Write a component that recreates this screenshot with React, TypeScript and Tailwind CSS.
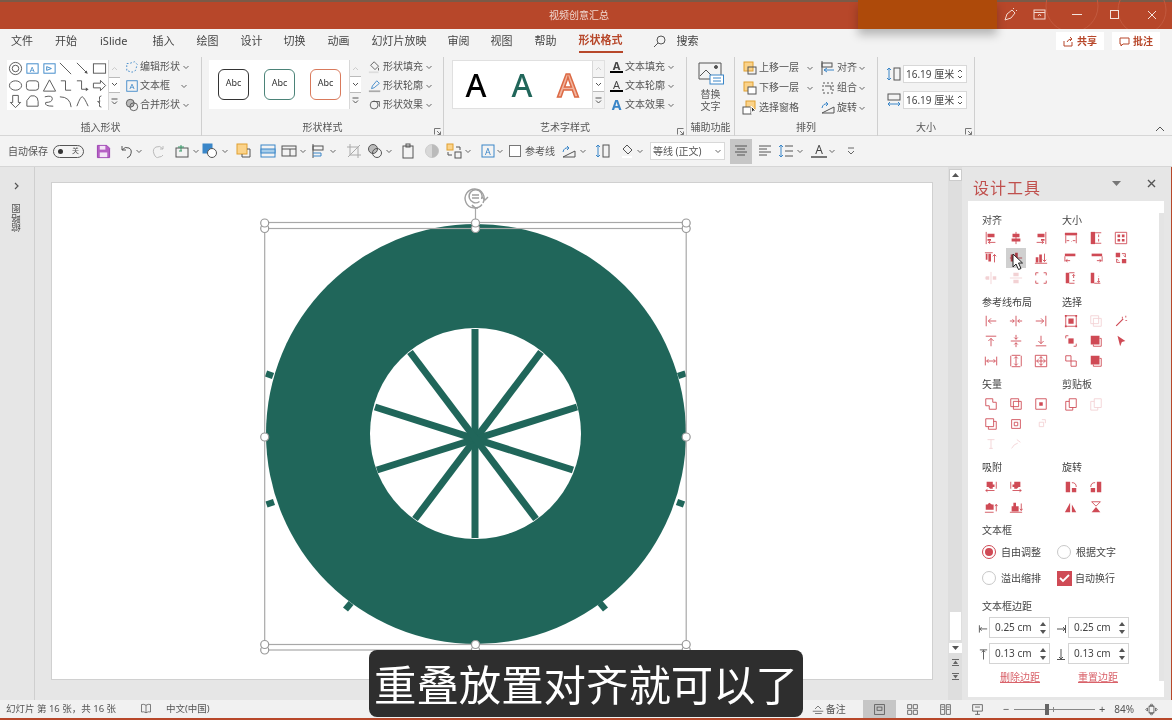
import type { ReactNode } from 'react'
import clsx from 'clsx'

const R = '#cf4a55'

function Ic({ children, size = 16, className }: { children: ReactNode; size?: number; className?: string }) {
  return (
    <svg width={size} height={size} viewBox="0 0 16 16" fill="none" stroke="#555" strokeWidth={1} className={clsx('shrink-0', className)}>
      {children}
    </svg>
  )
}

function Caret({ className }: { className?: string }) {
  return (
    <svg width="8" height="8" viewBox="0 0 8 8" fill="none" stroke="#666" strokeWidth={1} className={clsx('shrink-0', className)}>
      <path d="M1.500 3l2.500 2.500L6.500 3" />
    </svg>
  )
}

function Slot({ children, className }: { children: ReactNode; className?: string }) {
  return <div className={clsx('w-4 h-4 flex items-center justify-center shrink-0', className)}>{children}</div>
}

function Cmd({ icon, label, caretClass = 'ml-[2px]' }: { icon: ReactNode; label: string; caretClass?: string }) {
  return (
    <div className="flex items-center h-[19px] text-[10px] text-[#555] whitespace-nowrap">
      <div className="w-[15px] flex justify-center shrink-0">{icon}</div>
      <span className="ml-[1px]">{label}</span>
      <Caret className={caretClass} />
    </div>
  )
}

function GalleryScroll() {
  return (
    <div className="w-[12px] h-full flex flex-col border-l border-[#d8d8d8] bg-[#f3f3f3] shrink-0">
      <div className="h-1/3 flex items-center justify-center">
        <svg width="7" height="5" viewBox="0 0 7 5" fill="none" stroke="#ccc"><path d="M1 4l2.500-2.500L6 4" /></svg>
      </div>
      <div className="h-1/3 flex items-center justify-center border-y border-[#bbb] bg-white">
        <svg width="7" height="5" viewBox="0 0 7 5" fill="none" stroke="#555"><path d="M1 1l2.500 2.500L6 1" /></svg>
      </div>
      <div className="h-1/3 flex items-center justify-center">
        <svg width="7" height="7" viewBox="0 0 7 7" fill="none" stroke="#555"><path d="M0.500 1h6M1 3.500l2.500 2.500L6 3.500" /></svg>
      </div>
    </div>
  )
}

function Group({ width, label, children, expand }: { width: string; label: string; children: ReactNode; expand?: boolean }) {
  return (
    <div className={clsx('relative h-[79px] mt-[4px] flex flex-col border-r border-[#cfcfcf] shrink-0', width)}>
      <div className="h-[62px] flex">{children}</div>
      <div className="mt-[1px] text-center text-[10px] leading-[14px] text-[#555]">{label}</div>
      {expand && (
        <svg width="7" height="7" viewBox="0 0 7 7" fill="none" stroke="#777" className="absolute right-[2px] bottom-[1px]">
          <path d="M0.500 6.500V0.500H6.500M3 3l3.500 3.500M6.500 3.500v3h-3" />
        </svg>
      )}
    </div>
  )
}

const shapes = [
  <><circle cx="8" cy="8" r="6.500" /><circle cx="8" cy="8" r="3.500" /></>,
  <><rect x="2" y="3" width="12" height="10" stroke="#3a86c8" /><text x="5" y="11.500" fontSize="8" stroke="none" fill="#3a86c8">A</text></>,
  <><rect x="2" y="3" width="12" height="10" stroke="#3a86c8" /><path d="M5 6l5 2-5 2z" stroke="#3a86c8" /></>,
  <path d="M2 2l12 12" />,
  <><path d="M2 2l11 11" /><path d="M13.500 13.500l-3.500-1 2.500-2.500z" fill="#555" stroke="none" /></>,
  <rect x="1.500" y="3" width="13" height="10" />,
  <ellipse cx="8" cy="8" rx="6.500" ry="5" />,
  <rect x="1.500" y="3" width="13" height="10" rx="3" />,
  <path d="M8 2l6.500 12h-13z" />,
  <path d="M3 3h5v10h6" />,
  <><path d="M2 3h5v9h5" /><path d="M14.500 12l-3-2v4z" fill="#555" stroke="none" /></>,
  <path d="M1.500 5.500H9V2.500L14.500 8 9 13.500v-3H1.500z" />,
  <path d="M5 1.500h6V9h2.500L8 14.500 2.500 9H5z" />,
  <path d="M2 13V7l4-5h4q4 1 4 6l0 5z" />,
  <path d="M3 3q8-2 8 2T4 9q-2 4 8 4" />,
  <path d="M2 3q11 0 12 11" />,
  <path d="M2 13Q6 2 8 3t6 10" />,
  <path d="M10 2q-3 0-2 4t-2 2q3 0 2 3t2 3" />,
]

function Abc({ border }: { border: string }) {
  return (
    <div className={clsx('w-[31px] h-[31px] rounded-[6px] border flex items-center justify-center text-[9px] text-[#333] pb-[4px]', border)}>
      Abc
    </div>
  )
}

const FillIcon = <Ic size={14}><path d="M7 2l5 5-4 4-5-5zM12 9v3" /><path d="M1 14h11" stroke="#ddd" strokeWidth={2} /></Ic>
const OutlineIcon = <Ic size={14}><path d="M10 2l3 3-6 5-3 1 1-3z" stroke="#3a86c8" /><path d="M1 14h13" stroke="#aaa" strokeWidth={2} /></Ic>
const EffectIcon = <Ic size={14}><circle cx="7" cy="8" r="4.500" /><path d="M5 4h8v6" /></Ic>
const TextA = ({ outline, blue }: { outline?: boolean; blue?: boolean }) => (
  <div className={clsx('w-[15px] text-center font-bold leading-none', blue ? 'text-[14px] text-[#3a86c8]' : 'text-[11px] text-[#444]', outline && 'font-normal')}>
    A{!blue && <div className="h-[2px] w-[13px] mx-auto bg-black" />}
  </div>
)
const LayerIcon = ({ under }: { under?: boolean }) => (
  <Ic><rect x="2" y="2" width="9" height="9" fill="#fbd38a" stroke="#e0a030" /><rect x="6" y="7" width="8" height="7" fill={under ? '#fff' : 'none'} stroke="#555" /></Ic>
)

function Ribbon() {
  return (
    <div className="h-[82px] flex bg-[#f3f3f3] shrink-0">
      <Group width="w-[202px]" label="插入形状">
        <div className="ml-[7px] mt-[3px] w-[113px] h-[50px] flex bg-white">
          <div className="grid grid-cols-6 flex-1 content-center">
            {shapes.map((s, i) => (
              <div key={i} className="h-[16.5px] flex items-center justify-center"><Ic size={15}>{s}</Ic></div>
            ))}
          </div>
          <GalleryScroll />
        </div>
        <div className="ml-[4px] flex flex-col">
          <Cmd label="编辑形状" icon={<Ic size={14}><path d="M2 12V4h3l6-2 3 3-2 7-4 2z" strokeDasharray="2 2" stroke="#3a86c8" /></Ic>} />
          <Cmd label="文本框" caretClass="ml-[10px]" icon={<Ic size={14}><rect x="2" y="2" width="12" height="12" stroke="#3a86c8" /><text x="5" y="11.500" fontSize="9" stroke="none" fill="#3a86c8">A</text></Ic>} />
          <Cmd label="合并形状" icon={<Ic size={14}><circle cx="6" cy="6" r="4.500" fill="#bbb" /><circle cx="10" cy="10" r="4.500" /></Ic>} />
        </div>
      </Group>

      <Group width="w-[242px]" label="形状样式" expand>
        <div className="ml-[7px] mt-[3px] w-[152px] h-[49px] flex bg-white">
          <div className="flex-1 flex items-center pl-[9px] gap-[15px]">
            <Abc border="border-[#333]" />
            <Abc border="border-[#4b8378]" />
            <Abc border="border-[#d97a5c]" />
          </div>
          <GalleryScroll />
        </div>
        <div className="ml-[6px] flex flex-col">
          <Cmd label="形状填充" icon={FillIcon} />
          <Cmd label="形状轮廓" icon={OutlineIcon} />
          <Cmd label="形状效果" icon={EffectIcon} />
        </div>
      </Group>

      <Group width="w-[243px]" label="艺术字样式" expand>
        <div className="ml-[8px] mt-[3px] w-[153px] h-[49px] flex bg-white border border-[#e0e0e0]">
          <div className="flex-1 flex items-center text-[32px] font-medium leading-none text-center">
            <span className="w-[46px] text-black">A</span>
            <span className="w-[46px] text-[#21665a]">A</span>
            <span className="w-[46px] text-[#f2b59f] [-webkit-text-stroke:1.5px_#dc6a45]">A</span>
          </div>
          <GalleryScroll />
        </div>
        <div className="ml-[4px] flex flex-col">
          <Cmd label="文本填充" icon={<TextA />} />
          <Cmd label="文本轮廓" icon={<TextA outline />} />
          <Cmd label="文本效果" icon={<TextA blue />} />
        </div>
      </Group>

      <Group width="w-[48px]" label="辅助功能">
        <div className="w-full flex flex-col items-center pt-[5px] text-[10px] leading-[12px] text-[#555]">
          <svg width="26" height="23" viewBox="0 0 26 23" fill="none" stroke="#555">
            <path d="M1 1h22v12M1 1v16h12" />
            <path d="M2 14l6-6 6 6M16 6l2-2" />
            <circle cx="18" cy="5" r="1.500" fill="#555" />
            <rect x="12" y="13" width="13.500" height="9" fill="#fff" stroke="#3a86c8" />
            <path d="M15 16h8M15 19h8" stroke="#3a86c8" />
          </svg>
          <span className="mt-[3px]">替换</span>
          <span>文字</span>
        </div>
      </Group>

      <Group width="w-[143px]" label="排列">
        <div className="ml-[7px] pt-[1px] flex flex-col gap-[1px] text-[10px] text-[#555]">
          {[['上移一层', false], ['下移一层', true]].map(([t, u]) => (
            <div key={t as string} className="flex items-center h-[19px]">
              <LayerIcon under={u as boolean} />
              <span className="ml-[1px] w-[47px]">{t}</span>
              <Caret />
            </div>
          ))}
          <div className="flex items-center h-[19px]">
            <Ic><rect x="4" y="1" width="9" height="8" fill="#fbd38a" stroke="#e0a030" /><rect x="1" y="7" width="8" height="7" fill="#fff" /><path d="M9 6l5 5-3 0-1 3z" fill="#333" stroke="#fff" /></Ic>
            <span className="ml-[1px]">选择窗格</span>
          </div>
        </div>
        <div className="ml-[6px] pt-[1px] flex flex-col gap-[1px] text-[10px] text-[#555]">
          <div className="flex items-center h-[19px]"><Ic><path d="M2 1v14" /><rect x="2" y="3" width="10" height="4" /><path d="M14 10H4M7 8l-3 2 3 2" stroke="#3a86c8" /></Ic><span className="ml-[1px]">对齐</span><Caret className="ml-[1px]" /></div>
          <div className="flex items-center h-[19px]"><Ic><rect x="3" y="3" width="10" height="10" strokeDasharray="2 2" /><path d="M5 6h6v4" /></Ic><span className="ml-[1px]">组合</span><Caret className="ml-[1px]" /></div>
          <div className="flex items-center h-[19px]"><Ic><path d="M2 13h12V7z" /><path d="M2 8q1-5 6-4M6 2l2 2-2 2" stroke="#3a86c8" /></Ic><span className="ml-[1px]">旋转</span><Caret className="ml-[1px]" /></div>
        </div>
      </Group>

      <Group width="w-[97px]" label="大小" expand>
        <div className="ml-[8px] mt-[8px] flex flex-col gap-[8px]">
          <SizeRow icon={<Ic><path d="M3 2v12M1 4l2-2 2 2M1 12l2 2 2-2" stroke="#3a86c8" /><rect x="8" y="2" width="6" height="12" /></Ic>} />
          <SizeRow icon={<Ic><rect x="2" y="2" width="12" height="6" /><path d="M2 12h12M4 10l-2 2 2 2M12 10l2 2-2 2" stroke="#3a86c8" /></Ic>} />
        </div>
      </Group>

      <div className="flex-1 relative">
        <svg width="10" height="6" viewBox="0 0 10 6" fill="none" stroke="#555" className="absolute right-[7px] bottom-[3px]"><path d="M1 5l4-4 4 4" /></svg>
      </div>
    </div>
  )
}

function SizeRow({ icon }: { icon: ReactNode }) {
  return (
    <div className="flex items-center">
      {icon}
      <div className="ml-[1px] w-[64px] h-[18px] bg-white border border-[#d8d8d8] flex items-center text-[10px] text-[#444] pl-[2px]">
        <span>16.19 厘米</span>
        <div className="ml-auto mr-[3px] flex flex-col gap-[2px]">
          <svg width="6" height="4" viewBox="0 0 6 4" fill="none" stroke="#555"><path d="M1 3l2-2 2 2" /></svg>
          <svg width="6" height="4" viewBox="0 0 6 4" fill="none" stroke="#555"><path d="M1 1l2 2 2-2" /></svg>
        </div>
      </div>
    </div>
  )
}

function QuickBar() {
  return (
    <div className="h-[31px] flex items-center bg-[#f3f3f3] border-t border-[#d6d6d6] border-b-0 text-[#555] shrink-0">
      <span className="ml-[8px] w-[39px] text-[10px] whitespace-nowrap">自动保存</span>
      <div className="ml-[6px] w-[31px] h-[13px] rounded-full border border-[#555] flex items-center justify-between px-[4px]">
        <div className="w-[5px] h-[5px] rounded-full bg-[#333]" />
        <span className="text-[7px]">关</span>
      </div>
      <Slot className="ml-[11px]"><Ic size={15}><path d="M1.500 1.500h10l3 3v10h-13z" fill="#b55fc4" stroke="#9a3fb0" /><rect x="4" y="2" width="6" height="4" fill="#f3e4f6" stroke="none" /><rect x="4" y="9" width="8" height="5" fill="#f3e4f6" stroke="none" /></Ic></Slot>
      <Slot className="ml-[8px]"><Ic><path d="M3 3v4h4" /><path d="M3 7q3-4 7-2t1 8l-3 2" /></Ic></Slot>
      <Caret />
      <Slot className="ml-[7px]"><Ic><path d="M13 3v3h-3" stroke="#bbb" /><path d="M13 6q-3-4-7-2T4 11t5 3q3 0 4-2" stroke="#bbb" /></Ic></Slot>
      <Slot className="ml-[8px]"><Ic><rect x="2" y="5" width="12" height="9" /><path d="M5 8h3M7 2v6M4 4h6" stroke="#3a9a6a" /></Ic></Slot>
      <Caret className="ml-[2px]" />
      <Slot className="ml-[2px]"><Ic><rect x="1" y="1" width="9" height="9" fill="#3a86c8" stroke="#3a86c8" /><circle cx="10" cy="10" r="4.500" fill="#fff" /></Ic></Slot>
      <Caret className="ml-[3px]" />
      <Slot className="ml-[7px]"><Ic><rect x="1" y="1" width="10" height="10" fill="#fbd38a" stroke="#e0a030" /><path d="M11 6h3v8H6v-3" /></Ic></Slot>
      <Slot className="ml-[8px]"><Ic><rect x="1" y="2" width="14" height="12" stroke="#3a86c8" /><rect x="1" y="6" width="14" height="4" fill="#a7cdea" stroke="#3a86c8" /></Ic></Slot>
      <Slot className="ml-[5px]"><Ic><rect x="1" y="3" width="14" height="10" /><path d="M1 6h14M9 6v7" /></Ic></Slot>
      <Caret className="ml-[2px]" />
      <Slot className="ml-[4px]"><Ic><path d="M2 1v14" /><rect x="2" y="3" width="10" height="4" /><path d="M2 10h8v3H2" stroke="#3a86c8" /></Ic></Slot>
      <Caret className="ml-[2px]" />
      <Slot className="ml-[9px]"><Ic><path d="M4 1v11h11M1 4h11v11" stroke="#aaa" /><path d="M2 14L14 2" stroke="#aaa" /></Ic></Slot>
      <Slot className="ml-[5px]"><Ic><circle cx="6" cy="6" r="4.500" fill="#bbb" /><circle cx="10" cy="10" r="4.500" /></Ic></Slot>
      <Caret className="ml-[2px]" />
      <Slot className="ml-[7px]"><Ic><rect x="3" y="3" width="10" height="12" /><rect x="6" y="1" width="4" height="3" /></Ic></Slot>
      <Slot className="ml-[8px]"><Ic><circle cx="8" cy="8" r="6.500" fill="#d8d8d8" stroke="#ccc" /><path d="M8 1.500a6.500 6.500 0 010 13z" fill="#bbb" stroke="none" /></Ic></Slot>
      <Slot className="ml-[6px]"><Ic><rect x="1" y="1" width="6" height="6" fill="#fbd38a" stroke="#e0a030" /><rect x="9" y="9" width="6" height="6" /><path d="M10 4h4v3M6 12H2V9" /></Ic></Slot>
      <Caret className="ml-[2px]" />
      <Slot className="ml-[8px]"><Ic><rect x="2" y="2" width="12" height="12" stroke="#3a86c8" /><text x="5" y="11.500" fontSize="9" stroke="none" fill="#3a86c8">A</text></Ic></Slot>
      <Caret />
      <div className="ml-[5px] w-[12px] h-[12px] border border-[#777] bg-white shrink-0" />
      <span className="ml-[4px] w-[30px] text-[10px] whitespace-nowrap">参考线</span>
      <Slot className="ml-[6px]"><Ic><path d="M2 14h12V8z" /><path d="M2 9q1-5 6-4M6 3l2 2-2 2" stroke="#3a86c8" /></Ic></Slot>
      <Caret className="ml-[2px]" />
      <Slot className="ml-[8px]"><Ic><path d="M3 2v12M1 4l2-2 2 2M1 12l2 2 2-2" stroke="#3a86c8" /><rect x="8" y="2" width="6" height="12" /></Ic></Slot>
      <Slot className="ml-[9px]"><Ic><path d="M7 2l5 5-4 4-5-5z" /><path d="M2 14h10" stroke="#fff" strokeWidth={2} /></Ic></Slot>
      <Caret />
      <div className="ml-[6px] w-[75px] h-[18px] bg-white border border-[#d8d8d8] flex items-center justify-between px-[2px] text-[10px] shrink-0">
        <span className="whitespace-nowrap">等线 (正文)</span>
        <Caret />
      </div>
      <div className="ml-[5px] w-[22px] h-[25px] bg-[#c6c6c6] flex items-center justify-center shrink-0">
        <Ic><path d="M2 3h12M4 6h8M2 9h12M4 12h8" /></Ic>
      </div>
      <Slot className="ml-[5px]"><Ic><path d="M2 3h12M2 6h8M2 9h12M2 12h8" /></Ic></Slot>
      <Slot className="ml-[5px]"><Ic><path d="M7 3h8M7 8h8M7 13h8" /><path d="M3 2v12M1 4l2-2 2 2M1 12l2 2 2-2" stroke="#3a86c8" /></Ic></Slot>
      <Caret className="ml-[2px]" />
      <div className="ml-[7px] w-4 text-center text-[12px] leading-none text-[#444] shrink-0">A<div className="h-[2px] bg-[#777]" /></div>
      <Caret className="ml-[1px]" />
      <Slot className="ml-[7px]"><svg width="8" height="8" viewBox="0 0 8 8" fill="none" stroke="#666"><path d="M1 1h6M1 4l3 3 3-3" /></svg></Slot>
    </div>
  )
}

function handle(x: number, y: number) {
  return <circle key={`${x}-${y}`} cx={x} cy={y} r="4" fill="#fff" stroke="#999" strokeWidth="1.2" />
}

const spokes = [
  [475, 329, 475, 538],
  [541, 352, 415, 519],
  [577, 407, 377, 470],
  [573, 470, 375, 407],
  [536, 519, 410, 352],
]

const ticks = [
  [266, 373.5, 273, 376],
  [685.5, 373.5, 678, 376],
  [266.5, 504.5, 274, 502],
  [684, 504.5, 677, 502],
  [345.5, 609.5, 351, 603],
  [605.5, 609.5, 600, 603],
]

function Diagram() {
  return (
    <svg width="880" height="496" viewBox="52 183 880 496" className="block">
      <circle cx="476" cy="434" r="210" fill="#20665a" />
      <circle cx="475.5" cy="433.5" r="105.5" fill="#fff" />
      {spokes.map(([a, b, c, d]) => (
        <line key={a} x1={a} y1={b} x2={c} y2={d} stroke="#20665a" strokeWidth="7" />
      ))}
      {ticks.map(([a, b, c, d]) => (
        <line key={`${a}${b}`} x1={a} y1={b} x2={c} y2={d} stroke="#20665a" strokeWidth="6.5" />
      ))}
      <g fill="none" stroke="#a8a8a8" strokeWidth="1.2">
        <rect x="264.7" y="222.5" width="421.5" height="6" />
        <rect x="264.7" y="644.5" width="421.5" height="5.5" />
        <path d="M264.7 228V645M686.200 228V645M475.5 208V222" />
      </g>
      {[264.7, 475.5, 686.2].flatMap(x => [handle(x, 228.5), handle(x, 223), handle(x, 650), handle(x, 644.5)])}
      {handle(264.7, 437)}
      {handle(686.2, 437)}
      <g fill="none" stroke="#a0a0a0" strokeWidth="1.4">
        <path d="M483 203a9.500 9.500 0 1 0-1 1.500" />
        <path d="M481.500 199a6.500 6.500 0 1 0-2 2.500" />
        <path d="M472 195h7M472 198h7M472 205q2 3 6 3M482 197l3 3 3-3" />
      </g>
    </svg>
  )
}

const icons: Record<string, [string, string?]> = {
  al: ['M4 3h8v4H4zM4 9h4v2H4z', 'M2.500 1v14M13 13H5l2-1.500M5 13l2 1.500'],
  ac: ['M4 3h8v4H4zM3 8.500h10V12H3z', 'M8 1v14'],
  ar: ['M4 3h8v4H4zM8 9h4v2H8z', 'M13.500 1v14M3 13h8l-2-1.500M11 13l-2 1.500'],
  at: ['M2 3h2v7H2zM5 3h3v9H5z', 'M12 13V4l-2 2M12 4l2 2M1 2h9'],
  am: ['M2 4h4v8H2zM7 2h3v12H7z', 'M1 8h14'],
  ab: ['M2 7h3v6H2zM6 4h3v9H6z', 'M12 3v9l-2-2M12 12l2-2M1 14h14'],
  f1: ['M2 6h4v4H2zM10 6h4v4h-4z', 'M8 1v14M1 8h2'],
  f2: ['M5 2h6v4H5zM5 10h6v4H5z', 'M1 8h14'],
  f3: ['', 'M2 5V2h3M11 2h3v3M14 11v3h-3M5 14H2v-3'],
  s1: ['M1 2h14v3H1z', 'M2 5v9M14 5v9M3 11h3M13 11h-3M8 12h.5'],
  s2: ['M2 1h5v14H2z', 'M7 2h7M7 14h7M11 4v3M11 9v3'],
  s3: ['M4 4h3v3H4zM9 4h3v3H9zM4 9h3v3H4zM9 9h3v3H9z', 'M1.500 1.500h13v13h-13z'],
  s4: ['M1 3h12v3H1z', 'M1 6v6M2 11h5M2 11l2-1.500M2 11l2 1.500'],
  s5: ['M3 3h12v3H3z', 'M15 6v6M14 11H9M14 11l-2-1.500M14 11l-2 1.500'],
  s6: ['M2 2h5v5H2zM9 9h5v5H9z', 'M9 3h4v4l-2-2M7 13H3V9l2 2'],
  s7: ['M2 2h4v12H2z', 'M6 2h6M6 14h6M11 4V8M9.500 5.500L11 4l1.500 1.500M10 11h2'],
  s8: ['M2 2h4v12H2z', 'M6 14h7M11 6h.5M11 8v5M9.500 11.500L11 13l1.500-1.500'],
  g1: ['', 'M2.500 2v12M5 8h9M5 8l3-3M5 8l3 3'],
  g2: ['', 'M8 2v12M1 8h5M6 8L4 6M6 8l-2 2M15 8h-5M10 8l2-2M10 8l2 2'],
  g3: ['', 'M13.500 2v12M2 8h9M11 8L8 5M11 8l-3 3'],
  g4: ['', 'M2 2.500h12M8 5v9M8 5L5 8M8 5l3 3'],
  g5: ['', 'M2 8h12M8 1v5M8 6L6 4M8 6l2-2M8 15v-5M8 10l-2 2M8 10l2 2'],
  g6: ['', 'M2 13.500h12M8 2v9M8 11L5 8M8 11l3-3'],
  g7: ['', 'M1.500 3v10M14.500 3v10M3 8h10M3 8l2-2M3 8l2 2M13 8l-2-2M13 8l-2 2'],
  g8: ['', 'M3 1.500h10M3 14.500h10M8 3v10M8 3L6 5M8 3l2 2M8 13l-2-2M8 13l2-2M2 2v12M14 2v12'],
  g9: ['', 'M1.500 1.500h13v13h-13zM8 3v10M3 8h10M8 3L6 5M8 3l2 2M8 13l-2-2M8 13l2-2M3 8l2-2M3 8l2 2M13 8l-2-2M13 8l-2 2'],
  x1: ['M5 5h6v6H5zM1 1h2v2H1zM13 1h2v2h-2zM1 13h2v2H1zM13 13h2v2h-2z', 'M2 2h12v12H2z'],
  x2: ['', 'M2 2h9v9H2zM5 5h9v9H5z'],
  x3: ['M10 5l1 1-8 8-1-1zM9 3h1v2H9zM13 2h1v2h-1zM13 7h2v1h-2z', ''],
  x4: ['M5 5h6v6H5z', 'M2 5V2h3M14 11v3h-3'],
  x5: ['M2 2h10v10H2z', 'M12 5h2v9H5v-2'],
  x6: ['M4 2l9 6-4 1-2 5z', ''],
  x7: ['', 'M2 2h6v6H2zM8 8h6v6H8z'],
  x8: ['M2 2h10v10H2z', 'M12 5h2v9H5v-2'],
  v1: ['', 'M2 2h8v4h4v8H6v-4H2z'],
  v2: ['', 'M2 2h9v9H2zM5 5h9v9H5z'],
  v3: ['M6 6h4v4H6z', 'M2 2h12v12H2z'],
  v4: ['', 'M2 2h9v9H2zM5 11v3h9V5h-3'],
  v5: ['', 'M3 3h10v10H3zM6 6h4v4H6z'],
  v6: ['', 'M6 6h5v5H6zM9 3h4v4'],
  v7: ['', 'M4 3h8M8 3v10M6 13h4'],
  v8: ['', 'M3 13l3-4 4-2M9 3l4 3'],
  c1: ['', 'M6 2h8v10H6zM2 5h4M2 5v10h8v-3'],
  c2: ['', 'M6 2h8v10H6zM2 5h4M2 5v10h8v-3'],
  h1: ['M3 2h7v3h2v3h-2v2H7L5 8H3z', 'M2 12h10M2 12l2-1.500M2 12l2 1.500M14 2v8'],
  h2: ['M6 2h7v6h-2l-2 2H6V8H4V5h2z', 'M14 12H4M14 12l-2-1.500M14 12l-2 1.500M2 2v8'],
  h3: ['M2 5h2l2-2 3 2h2v6H2z', 'M14 5v8M14 5l-1.500 2M14 5l1.500 2M1 14h10'],
  h4: ['M3 7h2V3h3v4h3v6H3z', 'M14 4v8M14 12l-1.500-2M14 12l1.500-2M1 14h14'],
  r1: ['M2 2h5v12H2zM9 9h5v5H9z', 'M9 3q5 0 5 5'],
  r2: ['M9 2h5v12H9zM2 9h5v5H2z', 'M7 3q-5 0-5 5'],
  r3: ['M7 3v11H1zM9 5l5 9H9z', ''],
  r4: ['M3 14h10L8 8z', 'M3 2h10L8 7z'],
}

function PanelIcon({ name, faint }: { name: string; faint?: boolean }) {
  const [f, s] = icons[name]
  return (
    <svg width="14" height="14" viewBox="0 0 16 16" className={clsx(faint && 'opacity-25')}>
      {f && <path d={f} fill={R} />}
      {s && <path d={s} fill="none" stroke={R} strokeWidth="1" />}
    </svg>
  )
}

type Cell = string | null

function IconGrid({ rows, light }: { rows: Cell[]; light?: string[] }) {
  return (
    <div className="w-[80px] grid grid-cols-[25px_25px_25px] auto-rows-[20px] shrink-0">
      {rows.map((n, i) => (
        <div key={i} className="flex items-center justify-center">
          {n && <PanelIcon name={n} faint={light?.includes(n)} />}
        </div>
      ))}
    </div>
  )
}

function Title({ left, right, className }: { left: string; right?: string; className?: string }) {
  return (
    <div className={clsx('flex h-[14px] text-[10px] leading-[14px] text-[#444]', className)}>
      <span className="ml-[4px] w-[80px]">{left}</span>
      {right && <span>{right}</span>}
    </div>
  )
}

function Radio({ on, label }: { on?: boolean; label: string }) {
  return (
    <div className="w-[75px] flex items-center">
      <div className={clsx('ml-[4px] w-[14px] h-[14px] rounded-full border flex items-center justify-center shrink-0', on ? 'border-[#cf4a55]' : 'border-[#c8c8c8]')}>
        {on && <div className="w-[8px] h-[8px] rounded-full bg-[#cf4a55]" />}
      </div>
      <span className="ml-[5px] text-[10px] text-[#444] whitespace-nowrap">{label}</span>
    </div>
  )
}

function Spin({ value }: { value: string }) {
  return (
    <div className="w-[61px] h-[21px] bg-white border border-[#d4d4d4] flex items-center pl-[5px] text-[10px] text-[#444]">
      <span>{value}</span>
      <div className="ml-auto mr-[3px] flex flex-col gap-[4px]">
        <svg width="6" height="4" viewBox="0 0 6 4" fill="#555"><path d="M3 0l3 4H0z" /></svg>
        <svg width="6" height="4" viewBox="0 0 6 4" fill="#555"><path d="M0 0h6L3 4z" /></svg>
      </div>
    </div>
  )
}

function DesignPanel() {
  return (
    <div className="w-[210px] h-full flex flex-col bg-[#e6e6e6] border-r border-[#b7472a] shrink-0">
      <div className="h-[34px] flex items-center pl-[11px] pr-[15px] shrink-0">
        <span className="text-[16px] text-[#c0504d] tracking-[1px] mt-[8px]">设计工具</span>
        <svg width="9" height="5" viewBox="0 0 9 5" fill="#777" className="ml-auto mr-[26px] mb-[2px]"><path d="M0 0h9L4.500 5z" /></svg>
        <svg width="9" height="9" viewBox="0 0 9 9" stroke="#555" strokeWidth="1.4" className="mb-[2px]"><path d="M1 1l7 7M8 1L1 8" /></svg>
      </div>
      <div className="ml-[6px] w-[196px] h-[496px] bg-white relative pl-[10px] pt-[12px]">
        <div className="absolute right-0 top-[12px] w-[5px] h-[468px] bg-[#e4e4e4]" />
        <Title left="对齐" right="大小" />
        <div className="flex mt-[1px] relative">
          <IconGrid rows={['al', 'ac', 'ar', 'at', 'am', 'ab', 'f1', 'f2', 'f3']} light={['f1', 'f2']} />
          <IconGrid rows={['s1', 's2', 's3', 's4', 's5', 's6', 's7', 's8', null]} />
          <div className="absolute left-[28px] top-[20px] w-[20px] h-[20px] bg-[#d0d0d0] mix-blend-multiply" />
          <svg width="13" height="18" viewBox="0 0 13 18" className="absolute left-[34px] top-[25px]">
            <path d="M1 1v13l3-3 2.500 5.500 2.500-1-2.500-5.500h4z" fill="#fff" stroke="#222" />
          </svg>
        </div>
        <Title left="参考线布局" right="选择" className="mt-[7px]" />
        <div className="flex mt-[2px]">
          <IconGrid rows={['g1', 'g2', 'g3', 'g4', 'g5', 'g6', 'g7', 'g8', 'g9']} />
          <IconGrid rows={['x1', 'x2', 'x3', 'x4', 'x5', 'x6', 'x7', 'x8', null]} light={['x2']} />
        </div>
        <Title left="矢量" right="剪贴板" className="mt-[6px]" />
        <div className="flex mt-[3px]">
          <IconGrid rows={['v1', 'v2', 'v3', 'v4', 'v5', 'v6', 'v7', 'v8', null]} light={['v6', 'v7', 'v8']} />
          <IconGrid rows={['c1', 'c2', null]} light={['c2']} />
        </div>
        <Title left="吸附" right="旋转" className="mt-[6px]" />
        <div className="flex mt-[3px]">
          <IconGrid rows={['h1', 'h2', null, 'h3', 'h4', null]} />
          <IconGrid rows={['r1', 'r2', null, 'r3', 'r4', null]} />
        </div>
        <Title left="文本框" className="mt-[6px]" />
        <div className="flex h-[20px] mt-[5px] items-center">
          <Radio on label="自由调整" />
          <Radio label="根据文字" />
        </div>
        <div className="flex h-[20px] mt-[6px] items-center">
          <Radio label="溢出缩排" />
          <div className="w-[15px] h-[15px] bg-[#cf4a55] flex items-center justify-center shrink-0 ml-[4px]">
            <svg width="11" height="9" viewBox="0 0 11 9" fill="none" stroke="#fff" strokeWidth="1.800"><path d="M1 4l3 3 6-6" /></svg>
          </div>
          <span className="ml-[3px] text-[10px] text-[#444] whitespace-nowrap">自动换行</span>
        </div>
        <Title left="文本框边距" className="mt-[11px]" />
        <div className="mt-[4px] flex flex-col gap-[5px]">
          {[['M1.500 3v8M2 7h8M2 7l2-2M2 7l2 2', 'M10.500 3v8M10 7H2M10 7L8 5M10 7L8 9', '0.25 cm'], ['M2 1.500h8M6 12V2M6 2L4 4M6 2l2 2', 'M2 11.500h8M6 1v10M6 11L4 9M6 11l2-2', '0.13 cm']].map(([a, b, v]) => (
            <div key={v} className="flex items-center">
              <svg width="11" height="12" viewBox="0 0 12 12" fill="none" stroke="#555"><path d={a} /></svg>
              <Spin value={v} />
              <svg width="12" height="12" viewBox="0 0 12 12" fill="none" stroke="#555" className="ml-[5px] mr-[1px]"><path d={b} /></svg>
              <Spin value={v} />
            </div>
          ))}
        </div>
        <div className="mt-[6px] flex text-[10px] leading-[14px] text-[#d9626a] underline">
          <span className="ml-[22px]">删除边距</span>
          <span className="ml-[38px]">重置边距</span>
        </div>
      </div>
    </div>
  )
}

function StatusBar() {
  return (
    <div className="h-[18px] flex items-center bg-[#f1f1f1] text-[#555] text-[9.5px] whitespace-nowrap shrink-0">
      <span className="ml-[6px] w-[119px]">幻灯片 第 16 张，共 16 张</span>
      <Ic size={12} className="ml-[15px]"><path d="M2 2q3-1 6 1 3-2 6-1v10q-3-1-6 1-3-2-6-1zM8 3v10" /></Ic>
      <span className="ml-[14px]">中文(中国)</span>
      <Ic size={12} className="ml-[602px]"><path d="M1 11h14M4 14h9M8 4l-4 4M8 4l4 4" /></Ic>
      <span className="ml-[2px] w-[22px] text-[10px]">备注</span>
      <div className="ml-[15px] w-[33px] h-full bg-[#c6c6c6] flex items-center justify-center shrink-0">
        <Ic size={13}><rect x="2" y="2" width="12" height="12" /><rect x="5" y="5" width="6" height="4" /></Ic>
      </div>
      <Ic size={13} className="ml-[10px]"><path d="M2 2h5v5H2zM9 2h5v5H9zM2 9h5v5H2zM9 9h5v5H9z" /></Ic>
      <Ic size={13} className="ml-[20px]"><path d="M2 2h5v12H2zM9 2h5v12H9zM3 5h3M3 8h3M10 5h3M10 8h3" /></Ic>
      <Ic size={13} className="ml-[19px]"><path d="M2 2h12v8H2zM8 10v4M5 14h6M5 5h6" /></Ic>
      <span className="ml-[19px] text-[11px]">−</span>
      <div className="ml-[5px] w-[81px] h-[1px] bg-[#888] relative shrink-0">
        <div className="absolute left-[31px] -top-[5px] w-[4px] h-[11px] bg-[#666]" />
        <div className="absolute left-[39px] -top-[2px] w-[1px] h-[5px] bg-[#888]" />
      </div>
      <span className="ml-[4px] text-[11px]">+</span>
      <span className="ml-[9px] text-[10px]">84%</span>
      <Ic size={13} className="ml-[11px]"><rect x="5" y="4" width="6" height="8" /><path d="M1 8l2-2v4zM15 8l-2-2v4zM8 1L6 3h4zM8 15l-2-2h4z" /></Ic>
    </div>
  )
}

const tabs: [string, string][] = [
  ['文件', 'ml-[11px]'], ['开始', 'ml-[22px]'], ['iSlide', 'ml-[23px]'], ['插入', 'ml-[25px]'], ['绘图', 'ml-[22px]'],
  ['设计', 'ml-[22px]'], ['切换', 'ml-[21px]'], ['动画', 'ml-[22px]'], ['幻灯片放映', 'ml-[22px]'], ['审阅', 'ml-[21px]'],
  ['视图', 'ml-[21px]'], ['帮助', 'ml-[22px]'],
]

export default function App() {
  return (
    <div className="relative w-[1172px] h-[720px] overflow-hidden flex flex-col bg-[#f3f3f3] font-['Noto_Sans','Noto_Sans_CJK_SC',sans-serif]">
      {/* title bar */}
      <div className="relative h-[29px] bg-[#b7472a] shrink-0 flex items-center text-white">
        <div className="absolute left-0 right-0 top-0 h-[2px] bg-[#7a5a48]" />
        <span className="absolute left-[549px] top-[8px] text-[10px] leading-[14px] text-[#f0d8d0]">视频创意汇总</span>
        <svg width="130" height="29" viewBox="0 0 130 29" fill="none" stroke="#c25a3f" className="absolute right-0 top-0">
          <circle cx="100" cy="10" r="24" />
          <circle cx="30" cy="6" r="26" />
        </svg>
        <div className="ml-auto mr-[15px] flex items-center relative">
          <svg width="14" height="14" viewBox="0 0 14 14" fill="none" stroke="#f3d9d0"><path d="M2 12l2-6 5-4 3 3-4 5zM10 1l1-1M13 3l1-1" /></svg>
          <svg width="13" height="11" viewBox="0 0 13 11" fill="none" stroke="#f3d9d0" className="ml-[16px]"><rect x="1" y="1" width="11" height="9" /><path d="M1 3.500h11M5 7l1.500-2L8 7" /></svg>
          <div className="ml-[26px] w-[10px] h-[1px] bg-[#f3e4de]" />
          <div className="ml-[28px] w-[9px] h-[9px] border border-[#f3e4de]" />
          <svg width="10" height="10" viewBox="0 0 10 10" stroke="#f3e4de" className="ml-[28px]"><path d="M1 1l8 8M9 1L1 9" /></svg>
        </div>
      </div>

      {/* tabs */}
      <div className="h-[24px] flex items-center bg-[#f3f3f3] text-[11px] text-[#444] shrink-0">
        {tabs.map(([t, m]) => <span key={t} className={m}>{t}</span>)}
        <span className="ml-[22px] h-full flex items-center border-b-2 border-[#b7472a] text-[#b7472a] font-bold mb-0">形状格式</span>
        <svg width="13" height="13" viewBox="0 0 13 13" fill="none" stroke="#555" className="ml-[30px]"><circle cx="8" cy="5" r="4" /><path d="M5 8l-4 4" /></svg>
        <span className="ml-[11px]">搜索</span>
        <div className="ml-auto mr-[12px] flex gap-[8px] text-[10px] font-bold text-[#b7472a]">
          <div className="w-[48px] h-[18px] bg-white flex items-center justify-center gap-[3px]">
            <svg width="11" height="11" viewBox="0 0 11 11" fill="none" stroke="#b7472a"><path d="M1 5v5h8V6M4 6q1-3 5-3M7 1l2 2-2 2" /></svg>共享
          </div>
          <div className="w-[48px] h-[18px] bg-white flex items-center justify-center gap-[3px]">
            <svg width="11" height="11" viewBox="0 0 11 11" fill="none" stroke="#b7472a"><path d="M1 2h9v6H4l-2 2V8H1z" /></svg>批注
          </div>
        </div>
      </div>

      <Ribbon />
      <QuickBar />

      {/* work area */}
      <div className="h-[534px] flex bg-[#e6e6e6] border-t border-[#d6d6d6] shrink-0">
        <div className="w-[35px] h-full border-r border-[#cfcfcf] flex flex-col items-center pt-[15px] text-[#555] shrink-0">
          <svg width="6" height="8" viewBox="0 0 6 8" fill="none" stroke="#555" strokeWidth="1.200"><path d="M1 1l3 3-3 3" /></svg>
          <span className="mt-[14px] text-[9.5px] leading-[10px] [writing-mode:vertical-rl] rotate-180">缩略图</span>
        </div>
        <div className="w-[913px] pt-[15px] pl-[16px] shrink-0">
          <div className="w-[882px] h-[498px] bg-white border border-[#d0d0d0]">
            <Diagram />
          </div>
        </div>
        <div className="w-[14px] h-full bg-[#dedede] flex flex-col items-center pt-[2px] shrink-0">
          <div className="w-[13px] h-[12px] bg-white border border-[#ccc] flex items-center justify-center">
            <svg width="7" height="4" viewBox="0 0 7 4" fill="#555"><path d="M3.500 0L7 4H0z" /></svg>
          </div>
          <div className="mt-[431px] w-[11px] h-[28px] bg-white" />
          <div className="mt-[3px] w-[13px] h-[10px] bg-white flex items-center justify-center">
            <svg width="7" height="4" viewBox="0 0 7 4" fill="#555"><path d="M0 0h7L3.500 4z" /></svg>
          </div>
          <svg width="9" height="9" viewBox="0 0 9 9" fill="#666" className="mt-[5px]"><path d="M1 1h7v1H1zM4.500 2.500L7 6H2zM1 7h7v1H1z" /></svg>
          <svg width="9" height="9" viewBox="0 0 9 9" fill="#666" className="mt-[5px]"><path d="M1 1h7v1H1zM2 3h5L4.500 6.500zM1 7h7v1H1z" /></svg>
        </div>
        <DesignPanel />
      </div>

      <StatusBar />
      <div className="h-[2px] bg-[#b7472a] shrink-0" />

      {/* orange block laid over the title bar */}
      <div className="absolute left-[858px] top-0 w-[139px] h-[29px] bg-[#ae4a0a] shadow-[0_6px_10px_rgba(0,0,0,0.25)]" />

      {/* subtitle */}
      <div className="absolute left-[369px] top-[650px] w-[434px] h-[67px] rounded-[8px] bg-[#2e2e2e] flex items-center justify-center text-[42.4px] leading-none text-white whitespace-nowrap font-['Noto_Sans_CJK_SC',sans-serif]">
        重叠放置对齐就可以了
      </div>
    </div>
  )
}
